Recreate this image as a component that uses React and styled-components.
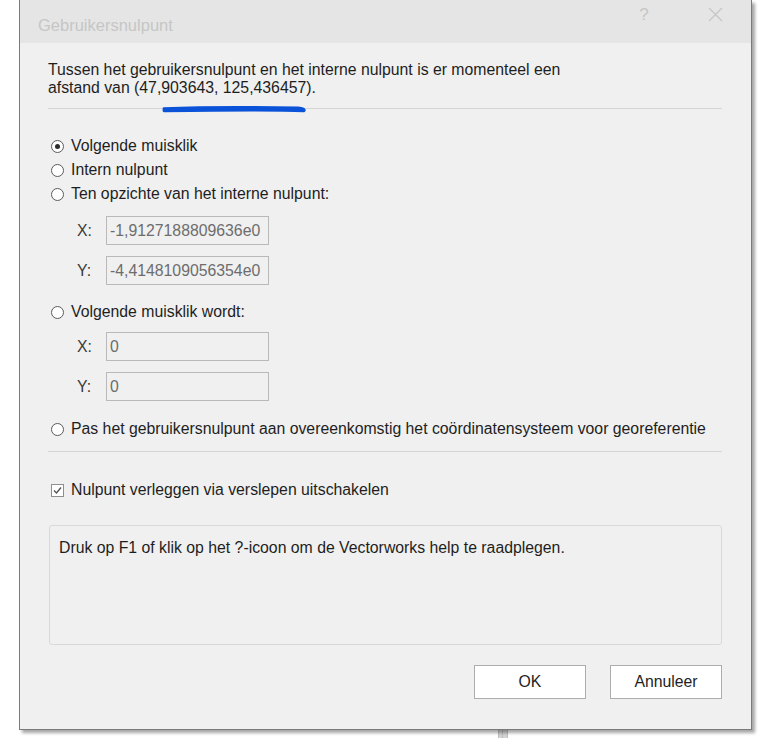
import React from "react";
import styled, { createGlobalStyle } from "styled-components";

const Global = createGlobalStyle`
  html, body { margin: 0; padding: 0; background: #ffffff; }
  body { font-family: "Liberation Sans", Arial, sans-serif; }
`;

const Page = styled.div`
  width: 760px;
  height: 738px;
  position: relative;
  overflow: hidden;
  background: #fff;
`;

const BehindScroll = styled.div`
  position: absolute;
  left: 498px;
  top: 728px;
  width: 10px;
  height: 12px;
  background: #d4d4d4;
  border-left: 1px solid #bdbdbd;
  border-right: 1px solid #bdbdbd;
  box-sizing: border-box;
  &::after {
    content: "";
    position: absolute;
    left: 3px;
    top: 0;
    width: 1px;
    height: 100%;
    background: #bdbdbd;
  }
`;

const Dialog = styled.div`
  position: relative;
  margin-left: 19px;
  width: 731px;
  height: 729px;
  background: #f0f0f0;
  border: 1px solid #7a7a7a;
  border-top: none;
  box-shadow: 3px 3px 3px rgba(0, 0, 0, 0.35);
  display: flex;
  flex-direction: column;
`;

const TitleBar = styled.div`
  height: 43px;
  background: #e5e5e5;
  display: flex;
  align-items: center;
  padding-left: 18px;
  padding-right: 26px;
  flex-shrink: 0;
`;

const Title = styled.div`
  flex: 1;
  font-size: 16.5px;
  color: #c6c6c6;
  padding-top: 8px;
`;

const TitleButton = styled.div`
  width: ${(p) => p.$w}px;
  margin-left: ${(p) => p.$ml}px;
  display: flex;
  justify-content: center;
  color: #c6c6c6;
  font-size: 17px;
  margin-top: -14px;
`;

const Content = styled.div`
  position: relative;
  padding: 18px 29px 0 28px;
  display: flex;
  flex-direction: column;
  font-size: 15.8px;
  color: #1e1e1e;
`;

const Intro = styled.div`
  line-height: 18px;
`;

const Separator = styled.div`
  height: 1px;
  background: #d5d5d5;
  margin-top: ${(p) => p.$mt}px;
`;

const OptionRow = styled.label`
  display: flex;
  align-items: center;
  height: 24px;
  margin-top: ${(p) => p.$mt || 0}px;
  gap: 7px;
  padding-left: 3px;
  white-space: nowrap;
`;

const RadioCircle = styled.span`
  width: 13px;
  height: 13px;
  box-sizing: border-box;
  border-radius: 50%;
  border: 1px solid #5a5a5a;
  background: #fff;
  display: flex;
  align-items: center;
  justify-content: center;
  flex-shrink: 0;
  &::after {
    content: "";
    width: 5px;
    height: 5px;
    border-radius: 50%;
    background: ${(p) => (p.$on ? "#2b2b2b" : "transparent")};
  }
`;

const CheckBox = styled.span`
  width: 13px;
  height: 13px;
  box-sizing: border-box;
  border: 1px solid #8f8f8f;
  background: #fff;
  display: flex;
  align-items: center;
  justify-content: center;
  flex-shrink: 0;
`;

const CoordGroup = styled.div`
  display: flex;
  flex-direction: column;
  gap: 11px;
  margin-top: ${(p) => p.$mt}px;
  padding-left: 29px;
`;

const CoordRow = styled.div`
  display: flex;
  align-items: center;
`;

const CoordLabel = styled.span`
  width: 29px;
  color: #3a3a3a;
`;

const CoordInput = styled.div`
  width: 163px;
  height: 29px;
  box-sizing: border-box;
  border: 1px solid #b9b9b9;
  background: #f0f0f0;
  color: #6d6d6d;
  display: flex;
  align-items: center;
  padding-left: 3px;
  overflow: hidden;
  white-space: nowrap;
`;

const HelpBox = styled.div`
  margin-top: 23px;
  margin-left: 1px;
  height: 120px;
  box-sizing: border-box;
  border: 1px solid #d9d9d9;
  border-radius: 3px;
  padding: 13px 9px;
  line-height: 18px;
`;

const ButtonBar = styled.div`
  display: flex;
  justify-content: flex-end;
  gap: 24px;
  margin-top: 20px;
`;

const Button = styled.button`
  width: 112px;
  height: 34px;
  background: #fff;
  border: 1px solid #adadad;
  font-family: "Liberation Sans", Arial, sans-serif;
  font-size: 15.8px;
  color: #1e1e1e;
  padding: 0;
`;

const Marker = styled.svg`
  position: absolute;
  left: 102px;
  top: 60px;
  pointer-events: none;
`;

export default function App() {
  return (
    <Page>
      <Global />
      <BehindScroll />
      <Dialog>
        <TitleBar>
          <Title>Gebruikersnulpunt</Title>
          <TitleButton $w={20} $ml={0}>?</TitleButton>
          <TitleButton $w={20} $ml={51}>
            <svg width="15" height="15" viewBox="0 0 15 15">
              <path d="M1 1 L14 14 M14 1 L1 14" stroke="#c6c6c6" strokeWidth="1.3" fill="none" />
            </svg>
          </TitleButton>
        </TitleBar>
        <Content>
          <Marker width="220" height="16" viewBox="0 0 220 16">
            <path
              d="M42 5.6 C70 4.6 130 4.2 176 5 C181 5.3 183 6.2 182 7.8 C165 7 110 6.8 42 7.8 Z"
              fill="#0a52d8"
              stroke="#0a52d8"
              strokeWidth="2.8"
              strokeLinejoin="round"
            />
          </Marker>
          <Intro>
            Tussen het gebruikersnulpunt en het interne nulpunt is er momenteel een
            <br />
            afstand van (47,903643, 125,436457).
          </Intro>
          <Separator $mt={11} />
          <OptionRow $mt={25}>
            <RadioCircle $on />
            Volgende muisklik
          </OptionRow>
          <OptionRow>
            <RadioCircle />
            Intern nulpunt
          </OptionRow>
          <OptionRow>
            <RadioCircle />
            Ten opzichte van het interne nulpunt:
          </OptionRow>
          <CoordGroup $mt={10}>
            <CoordRow>
              <CoordLabel>X:</CoordLabel>
              <CoordInput>-1,9127188809636e0</CoordInput>
            </CoordRow>
            <CoordRow>
              <CoordLabel>Y:</CoordLabel>
              <CoordInput>-4,4148109056354e0</CoordInput>
            </CoordRow>
          </CoordGroup>
          <OptionRow $mt={15}>
            <RadioCircle />
            Volgende muisklik wordt:
          </OptionRow>
          <CoordGroup $mt={8}>
            <CoordRow>
              <CoordLabel>X:</CoordLabel>
              <CoordInput>0</CoordInput>
            </CoordRow>
            <CoordRow>
              <CoordLabel>Y:</CoordLabel>
              <CoordInput>0</CoordInput>
            </CoordRow>
          </CoordGroup>
          <OptionRow $mt={16}>
            <RadioCircle />
            Pas het gebruikersnulpunt aan overeenkomstig het coördinatensysteem voor georeferentie
          </OptionRow>
          <Separator $mt={10} />
          <OptionRow $mt={26}>
            <CheckBox>
              <svg width="11" height="11" viewBox="0 0 11 11">
                <path d="M2 5.5 L4.5 8 L9 2.5" stroke="#555" strokeWidth="1.4" fill="none" />
              </svg>
            </CheckBox>
            Nulpunt verleggen via verslepen uitschakelen
          </OptionRow>
          <HelpBox>Druk op F1 of klik op het ?-icoon om de Vectorworks help te raadplegen.</HelpBox>
          <ButtonBar>
            <Button>OK</Button>
            <Button>Annuleer</Button>
          </ButtonBar>
        </Content>
      </Dialog>
    </Page>
  );
}
